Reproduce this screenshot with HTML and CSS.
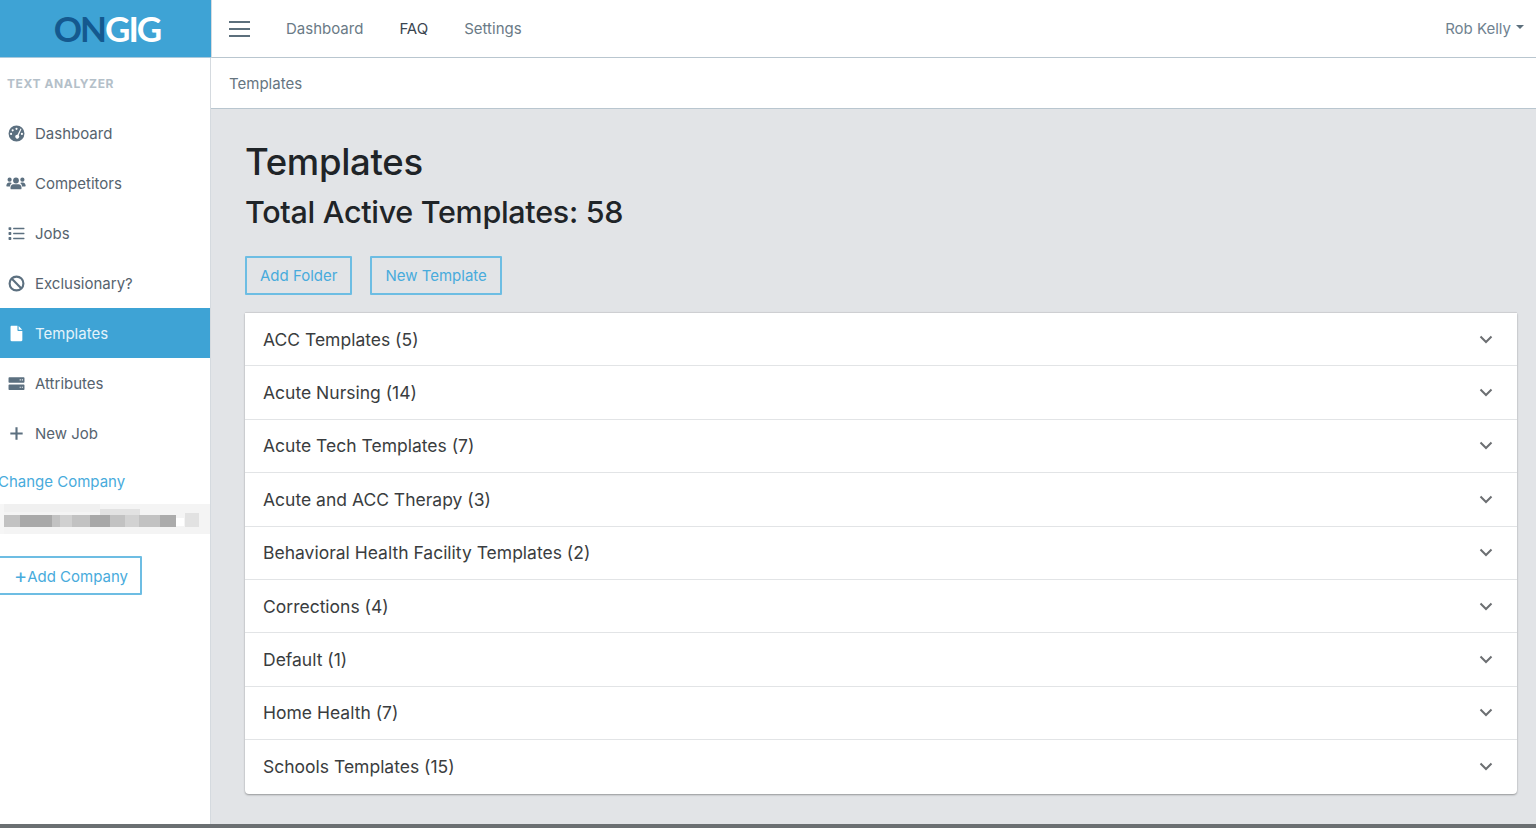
FILE: index.html
```html
<!DOCTYPE html>
<html lang="en">
<head>
<meta charset="utf-8">
<title>Templates</title>
<link rel="stylesheet" href="styles.css">
</head>
<body>
<div class="app">
  <header class="topbar">
    <div class="brand"><span class="logo"><span class="logo-on">ON</span><span class="logo-gig">GIG</span></span></div>
    <div class="topnav">
      <svg class="burger" viewBox="0 0 22 18" width="22" height="18"><path d="M0 2h21M0 9h21M0 16h21"/></svg>
      <a class="toplink">Dashboard</a>
      <a class="toplink toplink-active">FAQ</a>
      <a class="toplink">Settings</a>
      <a class="user">Rob Kelly<span class="caret"></span></a>
    </div>
  </header>
  <div class="body">
    <aside class="sidebar">
      <div class="side-title">TEXT ANALYZER</div>
      <a class="side-item">
        <svg class="ico" viewBox="0 0 16 16"><path fill-rule="evenodd" d="M8 .5a7.5 7.5 0 1 1 0 15 7.5 7.5 0 0 1 0-15ZM8 2.6a1 1 0 1 0 0 2 1 1 0 0 0 0-2ZM4.4 4a1 1 0 1 0 0 2 1 1 0 0 0 0-2ZM2.9 7.4a1 1 0 1 0 0 2 1 1 0 0 0 0-2ZM13.1 7.4a1 1 0 1 0 0 2 1 1 0 0 0 0-2ZM11.6 3.7 8.9 9.1a1.9 1.9 0 1 0 1.2.6l2.4-5.5a.5.5 0 0 0-.9-.5Z"/></svg>
        Dashboard</a>
      <a class="side-item">
        <svg class="ico ico-wide" viewBox="0 0 20 16"><circle cx="3.6" cy="4.2" r="2.1"/><circle cx="16.4" cy="4.2" r="2.1"/><circle cx="10" cy="5" r="2.9"/><path d="M.3 10.6C.3 8.6 1.5 7 3.2 7h1.2c.5 0 1 .2 1.4.5a5 5 0 0 0-1.9 3.6H1c-.4 0-.7-.2-.7-.5ZM19.7 10.6c0-2-1.2-3.6-2.9-3.6h-1.2c-.5 0-1 .2-1.4.5a5 5 0 0 1 1.9 3.6H19c.4 0 .7-.2.7-.5ZM7.5 8.7h5c1.7 0 3 1.4 3 3.1v1.1c0 .5-.4.9-.9.9H5.4a.9.9 0 0 1-.9-.9v-1.1c0-1.7 1.3-3.1 3-3.1Z"/></svg>
        Competitors</a>
      <a class="side-item">
        <svg class="ico" viewBox="0 0 16 16"><rect x="0.5" y="2" width="2.6" height="2.6" rx=".6"/><rect x="0.5" y="6.7" width="2.6" height="2.6" rx=".6"/><rect x="0.5" y="11.4" width="2.6" height="2.6" rx=".6"/><rect x="4.8" y="2.6" width="10.7" height="1.4" rx=".4"/><rect x="4.8" y="7.3" width="10.7" height="1.4" rx=".4"/><rect x="4.8" y="12" width="10.7" height="1.4" rx=".4"/></svg>
        Jobs</a>
      <a class="side-item">
        <svg class="ico" viewBox="0 0 16 16"><circle class="ico-line" cx="8" cy="8" r="6.5"/><path class="ico-line" d="M3.4 3.4l9.2 9.2"/></svg>
        Exclusionary?</a>
      <a class="side-item side-item-active">
        <svg class="ico" viewBox="0 0 16 16"><path d="M3.4.8h5.5v4.1c0 .4.3.7.7.7h3.9v8.6c0 .6-.5 1-1 1H3.4c-.6 0-1-.4-1-1V1.8c0-.6.4-1 1-1ZM10 .9l3.4 3.5H10Z"/></svg>
        Templates</a>
      <a class="side-item">
        <svg class="ico" viewBox="0 0 16 16"><path fill-rule="evenodd" d="M1.2 2.2h13.6c.4 0 .7.3.7.7v3.6c0 .4-.3.7-.7.7H1.2a.7.7 0 0 1-.7-.7V2.900c0-.4.3-.7.7-.7ZM1.200 9h13.600c.4 0 .7.3.7.7v3.6c0 .4-.3.7-.7.7H1.200a.7.7 0 0 1-.7-.7V9.700c0-.4.3-.7.7-.7ZM11 4.100v1h1v-1ZM13 4.100v1h1v-1ZM11 11v1h1v-1ZM13 11v1h1v-1Z"/></svg>
        Attributes</a>
      <a class="side-item">
        <svg class="ico" viewBox="0 0 16 16"><path class="ico-line" d="M8 2.200v11.600M2.200 8h11.600"/></svg>
        New Job</a>
      <a class="change-company">Change Company</a>
      <svg class="blurred" viewBox="0 0 211 30" width="211" height="30" aria-hidden="true">
        <rect width="211" height="30" fill="#f4f4f4"/>
        <rect x="0" y="0" width="100" height="8" fill="#f0f0f0"/>
        <rect x="100" y="5" width="40" height="6" fill="#e2e2e2"/>
        <rect x="0" y="11" width="176" height="12" fill="#c2c2c2"/>
        <rect x="20" y="11" width="32" height="12" fill="#a9a9a9"/>
        <rect x="60" y="11" width="12" height="12" fill="#d0d0d0"/>
        <rect x="90" y="11" width="20" height="12" fill="#a8a8a8"/>
        <rect x="125" y="11" width="14" height="12" fill="#d2d2d2"/>
        <rect x="160" y="11" width="16" height="12" fill="#ababab"/>
        <rect x="0" y="0" width="4" height="30" fill="#f6f6f6"/>
        <rect x="176" y="14" width="8" height="8" fill="#ffffff"/>
        <rect x="185" y="9" width="14" height="14" fill="#e2e2e2"/>
      </svg>
      <button class="btn btn-company"><span class="plus">+</span>Add Company</button>
    </aside>
    <div class="right">
      <div class="crumb">Templates</div>
      <main class="main">
        <h1 class="title">Templates</h1>
        <h2 class="subtitle">Total Active Templates: 58</h2>
        <div class="actions">
          <button class="btn">Add Folder</button>
          <button class="btn">New Template</button>
        </div>
        <section class="accordion">
          <div class="row">ACC Templates (5)<svg class="chev" viewBox="0 0 14 9"><path d="M1.500 1.500 7 7l5.500-5.500"/></svg></div>
          <div class="row">Acute Nursing (14)<svg class="chev" viewBox="0 0 14 9"><path d="M1.500 1.500 7 7l5.500-5.500"/></svg></div>
          <div class="row">Acute Tech Templates (7)<svg class="chev" viewBox="0 0 14 9"><path d="M1.500 1.500 7 7l5.500-5.500"/></svg></div>
          <div class="row">Acute and ACC Therapy (3)<svg class="chev" viewBox="0 0 14 9"><path d="M1.500 1.500 7 7l5.500-5.500"/></svg></div>
          <div class="row">Behavioral Health Facility Templates (2)<svg class="chev" viewBox="0 0 14 9"><path d="M1.500 1.500 7 7l5.500-5.500"/></svg></div>
          <div class="row">Corrections (4)<svg class="chev" viewBox="0 0 14 9"><path d="M1.500 1.500 7 7l5.500-5.500"/></svg></div>
          <div class="row">Default (1)<svg class="chev" viewBox="0 0 14 9"><path d="M1.500 1.500 7 7l5.500-5.500"/></svg></div>
          <div class="row">Home Health (7)<svg class="chev" viewBox="0 0 14 9"><path d="M1.500 1.500 7 7l5.500-5.500"/></svg></div>
          <div class="row">Schools Templates (15)<svg class="chev" viewBox="0 0 14 9"><path d="M1.500 1.500 7 7l5.500-5.500"/></svg></div>
        </section>
      </main>
    </div>
  </div>
  <div class="bottom-line"></div>
</div>
</body>
</html>
```
FILE: styles.css
```css
* { box-sizing: border-box; }
html, body { margin: 0; height: 100%; overflow: hidden; }
body { font-family: Inter, "Liberation Sans", sans-serif; font-size: 15px; color: #4f5d68; background: #fff; }
.app { display: flex; flex-direction: column; height: 828px; }

.topbar { display: flex; height: 58px; flex: none; }
.brand { width: 211px; background: #3ea3d5; display: flex; align-items: center; justify-content: center; flex: none; border-bottom: 1px solid #a9c9dc; }
.logo { font-family: Lato, sans-serif; font-weight: 700; font-size: 35px; letter-spacing: -2px; line-height: 1; padding-left: 3px; }
.logo-on { color: #14598f; }
.logo-gig { color: #fff; }
.topnav { flex: 1; display: flex; align-items: center; border-bottom: 1px solid #b9c6cf; border-left: 1px solid #d5dbe0; padding-left: 17px; padding-right: 12px; }
.burger { fill: none; stroke: #5c6f7c; stroke-width: 2; margin-right: 35px; }
.toplink { color: #6a7a86; margin-right: 36px; }
.toplink-active { color: #3b4650; }
.user { margin-left: auto; color: #6f8290; display: flex; align-items: center; }
.caret { width: 0; height: 0; border-left: 4.500px solid transparent; border-right: 4.500px solid transparent; border-top: 4.500px solid #5c6f7c; margin-left: 5px; margin-top: -3px; }

.body { flex: 1; display: flex; min-height: 0; }
.sidebar { width: 211px; flex: none; background: #fff; border-right: 1px solid #d5dadf; display: flex; flex-direction: column; overflow: hidden; }
.side-title { height: 50px; display: flex; align-items: center; padding-left: 7px; font-size: 12px; font-weight: 700; letter-spacing: .6px; color: #b4c0c9; }
.side-item { height: 50px; flex: none; display: flex; align-items: center; color: #56636e; padding-left: 8px; }
.ico { width: 17px; height: 17px; flex: none; margin-right: 10px; fill: #5c7080; }
.ico-wide { width: 20px; margin-left: -2px; margin-right: 9px; }
.ico-line { fill: none; stroke: #5c7080; stroke-width: 2; }
.side-item-active { background: #3ea3d5; color: #e4f3fb; }
.side-item-active .ico { fill: #fff; }
.change-company { margin-left: -2px; height: 46px; flex: none; display: flex; align-items: center; color: #48abdc; }
.blurred { display: block; flex: none; }
.btn { font: inherit; font-size: 15px; background: transparent; color: #48abdc; border: 2px solid #6dbde3; border-radius: 1px; height: 39px; padding: 0 13px; cursor: pointer; }
.btn-company { margin: 22px 0 0 -2px; align-self: flex-start; width: 144px; padding: 0 0 0 2px; height: 39px; }
.plus { font-size: 20px; line-height: 1; vertical-align: -1px; }

.right { flex: 1; min-width: 0; display: flex; flex-direction: column; }
.crumb { height: 51px; flex: none; display: flex; align-items: center; padding-left: 18px; color: #66757f; border-bottom: 1px solid #b9c6cf; }
.main { flex: 1; background: #e2e4e7; padding: 29px 19px 0 34px; }
.title { margin: 0; font-size: 36.500px; line-height: 48px; font-weight: 500; color: #1f2428; letter-spacing: -.3px; }
.subtitle { margin: 3px 0 0; font-size: 30.500px; line-height: 46px; font-weight: 500; color: #1f2428; letter-spacing: -.3px; }
.actions { display: flex; gap: 18px; margin-top: 21px; }
.accordion { margin-top: 18px; background: #fff; border-radius: 0 0 4px 4px; box-shadow: 0 1px 2px rgba(0,0,0,.35), 0 -1px 1px rgba(0,0,0,.08); }
.row { height: 53.400px; display: flex; align-items: center; justify-content: space-between; padding: 0 24px 0 18px; font-size: 17.500px; color: #3a3d40; border-bottom: 1px solid #e2e4e6; }
.row:last-child { border-bottom: 0; }
.chev { width: 14px; height: 9px; fill: none; stroke: #6c6f72; stroke-width: 2; }
.bottom-line { height: 4px; flex: none; background: #6b6f72; }
```
